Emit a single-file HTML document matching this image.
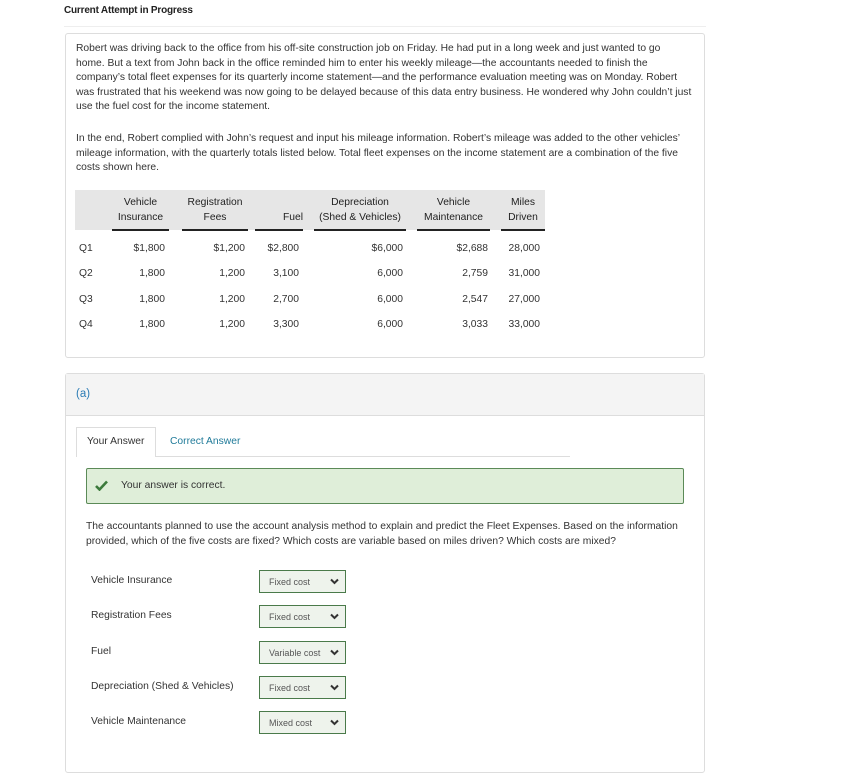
<!DOCTYPE html>
<html><head><meta charset="utf-8"><style>
*{margin:0;padding:0;box-sizing:border-box}
body{width:857px;height:751px;background:#fff;font-family:"Liberation Sans",sans-serif;color:#333;position:relative;overflow:hidden;font-size:10.3px}
.a{position:absolute;white-space:nowrap}
.box{position:absolute;border:1px solid #ddd;border-radius:3px}
.p{position:absolute;left:76px;line-height:14.5px;white-space:nowrap}
.r{text-align:right}
.ul{position:absolute;height:1.5px;background:#222;top:229px}
.h{position:absolute;top:195px;text-align:center;line-height:15px;color:#222}
.sel{position:absolute;left:259px;width:87px;height:23px;border:1.5px solid #4a7a4a;background:#eef3ec;font-size:9px;color:#555;padding:6px 0 0 9px}
.sel svg{position:absolute;right:6px;top:7px}
.lab{position:absolute;left:91px;font-size:10.3px}
</style></head><body>
<div class="a" style="left:64px;top:5px;font-weight:bold;font-size:10px;color:#222;letter-spacing:-0.2px">Current Attempt in Progress</div>
<div style="position:absolute;left:64px;top:26px;width:642px;height:1px;background:#eee"></div>
<div class="box" style="left:65px;top:33px;width:640px;height:325px"></div>
<div class="p" style="top:42px">Robert was driving back to the office from his off-site construction job on Friday. He had put in a long week and just wanted to go<br>home. But a text from John back in the office reminded him to enter his weekly mileage—the accountants needed to finish the<br>company’s total fleet expenses for its quarterly income statement—and the performance evaluation meeting was on Monday. Robert<br>was frustrated that his weekend was now going to be delayed because of this data entry business. He wondered why John couldn’t just<br>use the fuel cost for the income statement.</div>
<div class="p" style="top:132px">In the end, Robert complied with John’s request and input his mileage information. Robert’s mileage was added to the other vehicles’<br>mileage information, with the quarterly totals listed below. Total fleet expenses on the income statement are a combination of the five<br>costs shown here.</div>
<div style="position:absolute;left:75px;top:190px;width:470px;height:40px;background:#e6e6e6"></div>
<div class="h" style="left:112px;width:57px">Vehicle<br>Insurance</div>
<div class="h" style="left:182px;width:66px">Registration<br>Fees</div>
<div class="h" style="left:255px;width:48px;text-align:right;top:210px">Fuel</div>
<div class="h" style="left:314px;width:92px">Depreciation<br>(Shed &amp; Vehicles)</div>
<div class="h" style="left:417px;width:73px">Vehicle<br>Maintenance</div>
<div class="h" style="left:501px;width:44px">Miles<br>Driven</div>
<div class="ul" style="left:112px;width:57px"></div>
<div class="ul" style="left:182px;width:66px"></div>
<div class="ul" style="left:255px;width:48px"></div>
<div class="ul" style="left:314px;width:92px"></div>
<div class="ul" style="left:417px;width:73px"></div>
<div class="ul" style="left:501px;width:44px"></div>
<div class="a" style="left:0;top:236px;width:560px;line-height:25.3px">
<div class="a" style="left:79px">Q1<br>Q2<br>Q3<br>Q4</div>
<div class="a r" style="left:104px;width:61px">$1,800<br>1,800<br>1,800<br>1,800</div>
<div class="a r" style="left:184px;width:61px">$1,200<br>1,200<br>1,200<br>1,200</div>
<div class="a r" style="left:250px;width:49px">$2,800<br>3,100<br>2,700<br>3,300</div>
<div class="a r" style="left:330px;width:73px">$6,000<br>6,000<br>6,000<br>6,000</div>
<div class="a r" style="left:420px;width:68px">$2,688<br>2,759<br>2,547<br>3,033</div>
<div class="a r" style="left:500px;width:40px">28,000<br>31,000<br>27,000<br>33,000</div>
</div>
<div class="box" style="left:65px;top:373px;width:640px;height:400px"></div>
<div style="position:absolute;left:66px;top:374px;width:638px;height:42px;background:#f4f4f4;border-bottom:1px solid #ddd"></div>
<div class="a" style="left:76px;top:388px;color:#2a7bb5;font-size:11.5px">(a)</div>
<div style="position:absolute;left:76px;top:456px;width:494px;height:1px;background:#ddd"></div>
<div style="position:absolute;left:76px;top:427px;width:80px;height:30px;border:1px solid #ddd;border-bottom:none;background:#fff"></div>
<div class="a" style="left:87px;top:436px">Your Answer</div>
<div class="a" style="left:170px;top:436px;color:#1f7a99">Correct Answer</div>
<div style="position:absolute;left:86px;top:468px;width:598px;height:36px;border:1px solid #5b8a57;border-radius:2px;background:#dfeed9"></div>
<svg class="a" style="left:95px;top:480px" width="13" height="11" viewBox="0 0 13 11"><path d="M1 6 L4.5 9.5 L12 1.5" stroke="#3c7a3c" stroke-width="2.6" fill="none"/></svg>
<div class="a" style="left:121px;top:480px">Your answer is correct.</div>
<div class="a" style="left:86px;top:520px;line-height:14.5px">The accountants planned to use the account analysis method to explain and predict the Fleet Expenses. Based on the information<br>provided, which of the five costs are fixed? Which costs are variable based on miles driven? Which costs are mixed?</div>
<div class="lab" style="top:575px">Vehicle Insurance</div>
<div class="lab" style="top:610px">Registration Fees</div>
<div class="lab" style="top:646px">Fuel</div>
<div class="lab" style="top:681px">Depreciation (Shed &amp; Vehicles)</div>
<div class="lab" style="top:716px">Vehicle Maintenance</div>
<div class="sel" style="top:570px">Fixed cost<svg width="9" height="7" viewBox="0 0 9 7"><path d="M1 1.5 L4.5 5 L8 1.5" stroke="#333" stroke-width="2" fill="none"/></svg></div>
<div class="sel" style="top:605px">Fixed cost<svg width="9" height="7" viewBox="0 0 9 7"><path d="M1 1.5 L4.5 5 L8 1.5" stroke="#333" stroke-width="2" fill="none"/></svg></div>
<div class="sel" style="top:641px">Variable cost<svg width="9" height="7" viewBox="0 0 9 7"><path d="M1 1.5 L4.5 5 L8 1.5" stroke="#333" stroke-width="2" fill="none"/></svg></div>
<div class="sel" style="top:676px">Fixed cost<svg width="9" height="7" viewBox="0 0 9 7"><path d="M1 1.5 L4.5 5 L8 1.5" stroke="#333" stroke-width="2" fill="none"/></svg></div>
<div class="sel" style="top:711px">Mixed cost<svg width="9" height="7" viewBox="0 0 9 7"><path d="M1 1.5 L4.5 5 L8 1.5" stroke="#333" stroke-width="2" fill="none"/></svg></div>
</body></html>
